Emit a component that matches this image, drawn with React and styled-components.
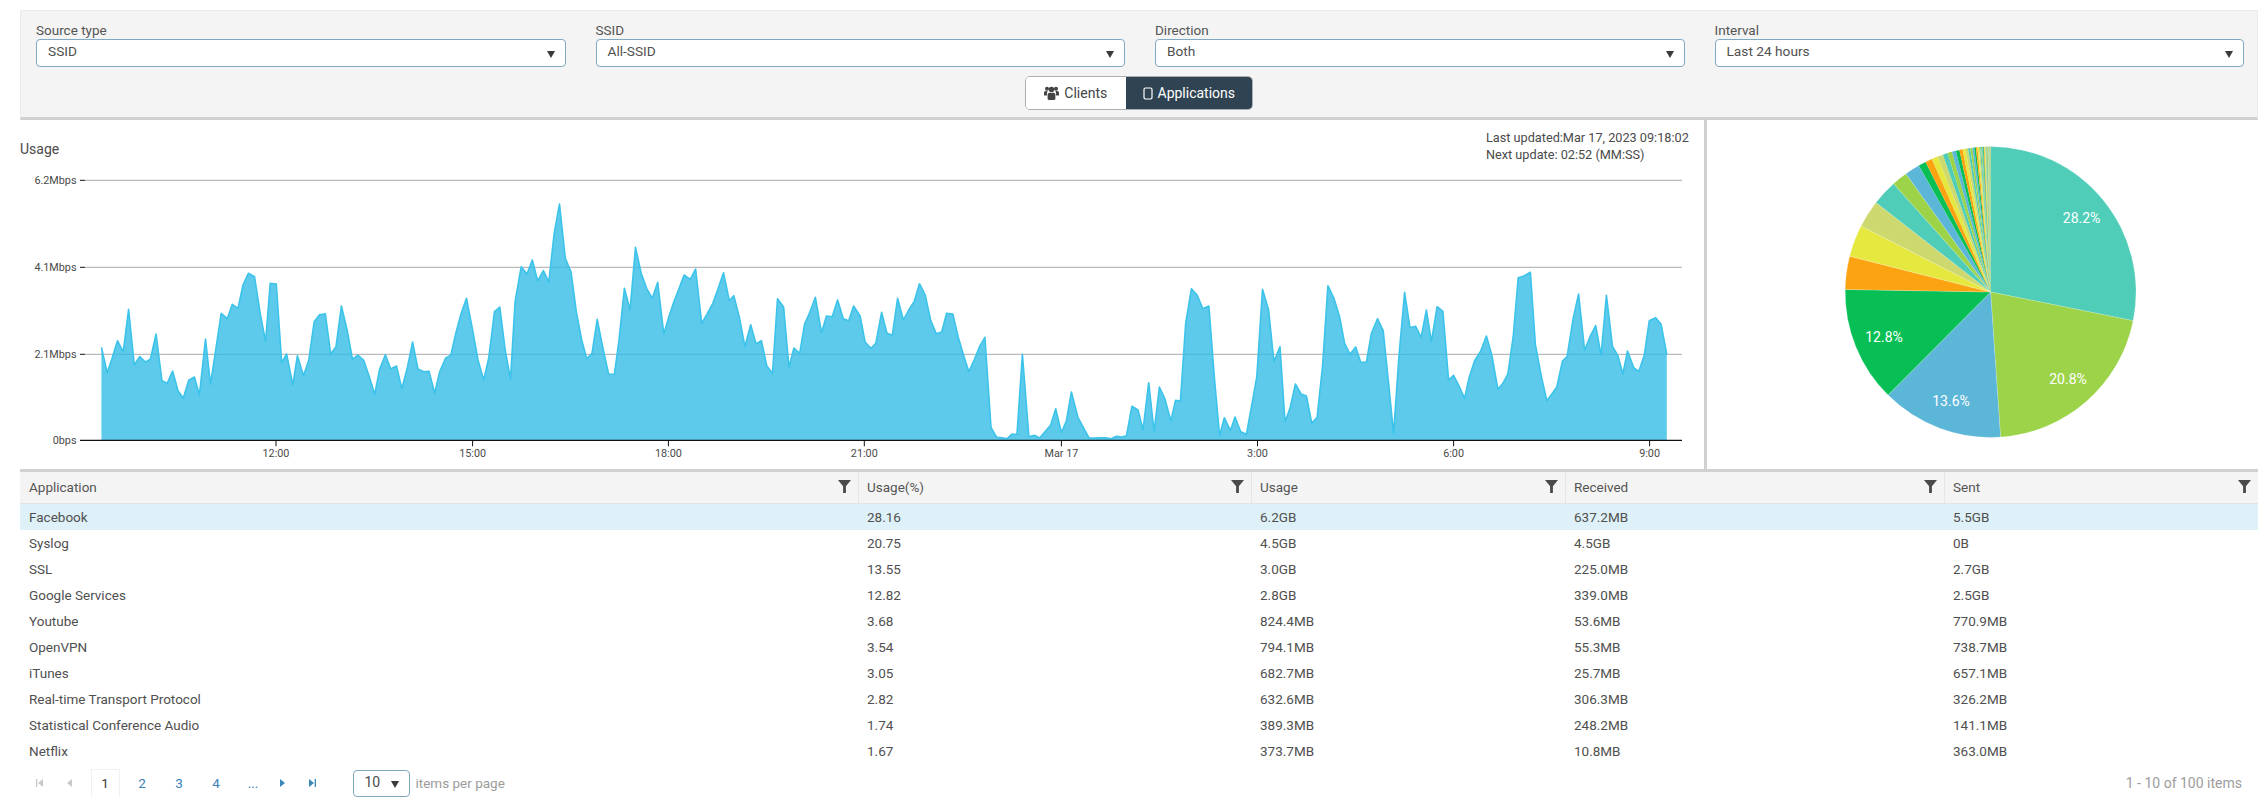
import React from "react";
import styled, { createGlobalStyle } from "styled-components";

const Global = createGlobalStyle`
  html, body { margin: 0; padding: 0; background: #fff; }
  body { font-family: Roboto, "Liberation Sans", sans-serif; color: #4a4a4a; overflow: hidden; }
  * { box-sizing: border-box; }
`;

const Page = styled.div`
  width: 2265px;
  height: 804px;
  padding: 10px 7px 0 20px;
  overflow: hidden;
`;

const FilterPanel = styled.section`
  height: 110px;
  padding: 10px 13px 0 15px;
  background: #f4f4f4;
  border: 1px solid #ebebeb;
  border-bottom: 3px solid #d2cfcf;
  display: flex;
  flex-direction: column;
  align-items: center;
`;

const FilterGrid = styled.div`
  width: 100%;
  display: grid;
  grid-template-columns: repeat(4, 1fr);
  column-gap: 30px;
`;

const Field = styled.div`
  display: flex;
  flex-direction: column;
`;

const FieldLabel = styled.label`
  font-size: 13.5px;
  line-height: 18px;
  color: #555;
`;

const Select = styled.div`
  height: 28px;
  background: #fff;
  border: 1px solid #7fa9c2;
  border-radius: 4px;
  padding: 0 10px 4px 11px;
  display: flex;
  align-items: center;
  justify-content: space-between;
  font-size: 13.7px;
  color: #505050;
`;

const Caret = styled.span`
  width: 0;
  height: 0;
  margin-top: 6px;
  border-left: 4px solid transparent;
  border-right: 4px solid transparent;
  border-top: 7px solid #3a3a3a;
`;

const Toggle = styled.div`
  display: flex;
  margin: 9px 2px 0 0;
  width: 228px;
  height: 34px;
  border: 1px solid #a9b0b5;
  border-radius: 5px;
  overflow: hidden;
`;

const ToggleButton = styled.button`
  border: 0;
  padding: 0;
  width: ${(p) => (p.$active ? "127px" : "100px")};
  display: flex;
  align-items: center;
  justify-content: center;
  gap: 5px;
  font-family: inherit;
  font-size: 14px;
  background: ${(p) => (p.$active ? "#2f4352" : "#fff")};
  color: ${(p) => (p.$active ? "#fff" : "#444")};
`;

const ContentRow = styled.section`
  display: flex;
  height: 349px;
`;

const ChartPane = styled.div`
  width: 1687px;
  border-right: 3px solid #d2cfcf;
  display: flex;
  flex-direction: column;
`;

const ChartHead = styled.div`
  height: 45px;
  padding: 9px 15px 0 0;
  display: flex;
  justify-content: space-between;
  font-size: 12.7px;
  line-height: 17px;
  color: #4a4a4a;
`;

const ChartTitle = styled.div`
  padding-top: 12px;
  font-size: 14px;
`;

const Stamp = styled.div`
  width: 203px;
  white-space: nowrap;
`;

const Svg = styled.svg`
  display: block;
`;

const AxisText = styled.text`
  font-size: 10.8px;
  fill: #4a4a4a;
  font-family: Roboto, sans-serif;
`;

const PieLabel = styled.text`
  font-size: 14px;
  fill: #fff;
  font-family: Roboto, sans-serif;
  text-anchor: middle;
  dominant-baseline: central;
`;

const PiePane = styled.div`
  flex: 1;
`;

const Table = styled.section`
  border-top: 3px solid #d2cfcf;
`;

const COLS = "838px 393px 314px 379px 314px";

const HeadRow = styled.div`
  display: grid;
  grid-template-columns: ${COLS};
  height: 32px;
  background: #f4f4f4;
  border-bottom: 1px solid #e3e3e3;
`;

const HeadCell = styled.div`
  display: flex;
  align-items: center;
  justify-content: space-between;
  padding: 0 7px 2px ${(p) => (p.$first ? "9px" : "8px")};
  font-size: 13.5px;
  color: #555;
  border-left: ${(p) => (p.$first ? "0" : "1px solid #e6e6e6")};
`;

const Row = styled.div`
  display: grid;
  grid-template-columns: ${COLS};
  height: 26px;
  align-items: center;
  font-size: 13.5px;
  color: #505050;
  background: ${(p) => (p.$selected ? "#dff1f8" : "#fff")};
`;

const Cell = styled.div`
  padding-left: 9px;
  white-space: nowrap;
`;

const Pager = styled.div`
  height: 39px;
  display: flex;
  align-items: center;
  justify-content: space-between;
  padding: 0 16px 1px 0;
  font-size: 13.5px;
`;

const PagerLeft = styled.div`
  display: flex;
  align-items: center;
  padding-left: 4px;
`;

const NavIcon = styled.span`
  width: 30px;
  margin-left: ${(p) => p.$shift || 0}px;
  display: flex;
  justify-content: center;
  color: ${(p) => (p.$off ? "#c9c9c9" : "#3b87b8")};
`;

const PageNum = styled.span`
  width: 37px;
  height: 28px;
  margin-left: ${(p) => (p.$current ? "2.5px" : "0")};
  display: flex;
  align-items: center;
  justify-content: center;
  color: ${(p) => (p.$current ? "#3a3a3a" : "#3b82b8")};
  position: relative;
  &::before {
    content: "";
    display: ${(p) => (p.$current ? "block" : "none")};
    position: absolute;
    top: 0;
    bottom: 0;
    left: 4px;
    right: 4px;
    border: 1px solid #f1f1f1;
    border-bottom: 0;
  }
`;

const PerPage = styled.div`
  width: 57px;
  height: 27px;
  margin-left: 25px;
  border: 1px solid #7fa9c2;
  border-radius: 4px;
  padding: 0 10px 3px 11px;
  display: flex;
  align-items: center;
  justify-content: space-between;
  font-size: 14px;
  color: #4a4a4a;
`;

const PagerHint = styled.span`
  margin-left: 6px;
  color: #9c9c9c;
  font-size: ${(p) => p.$size || 13.5}px;
`;

const Funnel = () => (
  <svg width="13" height="13" viewBox="0 0 13 13" aria-hidden="true">
    <path d="M0 0h13L7.9 6.2V13H5.1V6.2z" fill="#4a4a4a" />
  </svg>
);

const Tablet = () => (
  <svg width="10" height="13" viewBox="0 0 10 13" aria-hidden="true">
    <rect x="1" y="1" width="8" height="11" rx="1.4" fill="none" stroke="#fff" strokeWidth="1.2" />
  </svg>
);

const Users = () => (
  <svg width="15" height="14" viewBox="0 0 15 14" aria-hidden="true">
    <g fill="#444">
      <circle cx="3" cy="2.7" r="2" />
      <circle cx="12" cy="2.7" r="2" />
      <circle cx="7.5" cy="3.4" r="2.7" />
      <path d="M0 9.4V7c0-1 .7-1.9 1.7-1.9h1.8c-.5 1.1-.7 2.6-.6 4.3z" />
      <path d="M15 9.4V7c0-1-.7-1.9-1.7-1.9h-1.8c.5 1.1.7 2.6.6 4.3z" />
      <path d="M3.6 12.4V9c0-1.3.9-2.2 1.9-2.2h4c1 0 1.9.9 1.9 2.2v3.4c0 1-.9 1.6-1.9 1.6h-4c-1 0-1.9-.6-1.9-1.6z" />
    </g>
  </svg>
);

const Nav = ({ d }) => (
  <svg width="9" height="10" viewBox="0 0 9 10" aria-hidden="true">
    <path d={d} fill="currentColor" />
  </svg>
);

const seg4 = [[265,592],[280,668],[293,625],[307,572],[322,606],[336,478],[351,645],[365,620],[380,636],[393,628],[408,552],[423,692],[437,700],[451,663],[465,722],[479,745],[493,691],[508,681],[521,735],[537,567],[550,703],[565,590],[578,490],[594,506],[607,463],[622,475],[635,405],[649,370],[665,380],[680,490],[694,575],[706,400],[722,402],[736,638],[749,612],[765,705],[777,617],[793,677],[807,630],[821,515],[835,494],[850,491],[864,612],[878,590],[892,468],[907,540],[921,628],[935,615],[950,630],[965,680],[979,733],[992,658],[1007,614],[1021,657],[1036,648],[1050,716],[1064,655],[1078,576],[1092,657],[1107,665],[1121,664],[1136,730],[1149,665],[1164,625],[1178,616],[1192,545],[1205,490],[1219,445],[1234,535],[1249,630],[1264,690],[1277,625],[1292,485],[1306,471],[1320,600],[1334,688],[1346,455],[1362,350],[1377,372],[1391,330],[1405,393],[1420,362],[1434,396],[1448,250],[1462,162],[1477,325],[1492,365],[1506,485],[1520,570],[1533,626],[1547,610]];
const seg5 = [[45,448],[60,535],[75,613],[90,612],[102,510],[116,355],[131,420],[145,232],[160,310],[174,355],[189,385],[203,337],[219,492],[233,437],[247,390],[260,352],[272,315],[288,328],[302,297],[318,460],[333,430],[347,400],[361,355],[375,308],[390,392],[402,377],[417,445],[431,530],[446,464],[460,522],[474,512],[488,588],[503,610],[516,386],[532,411],[546,592],[559,534],[574,550],[587,462],[601,425],[615,382],[631,488],[644,438],[659,440],[673,390],[688,446],[702,452],[715,408],[732,438],[745,516],[760,535],[773,520],[788,427],[802,490],[816,496],[830,385],[845,450],[859,420],[873,395],[887,341],[902,375],[916,450],[931,491],[945,486],[958,430],[974,432],[988,500],[1002,555],[1016,605],[1030,570],[1044,530],[1058,502],[1074,772],[1088,801],[1102,803],[1116,806],[1128,793],[1142,793],[1156,553],[1173,800],[1187,796],[1201,804],[1215,785],[1230,765],[1243,716],[1258,788],[1271,752],[1284,666],[1301,742],[1315,772],[1330,804],[1345,804],[1359,803],[1373,803],[1388,806],[1402,799],[1416,801],[1428,797],[1442,709],[1458,720],[1471,780],[1486,638],[1500,785],[1514,651],[1528,686],[1544,753],[1556,691]];
const seg6 = [[85,693],[100,460],[116,356],[132,375],[148,416],[165,408],[180,620],[195,797],[208,743],[225,782],[238,741],[254,785],[270,793],[285,705],[299,620],[315,358],[332,420],[347,575],[364,530],[378,755],[392,715],[407,642],[423,672],[438,678],[453,760],[468,742],[483,590],[498,347],[515,385],[531,440],[545,520],[560,553],[576,531],[590,577],[606,576],[620,490],[637,446],[653,482],[668,640],[682,792],[697,560],[713,367],[728,473],[744,469],[759,502],[774,420],[788,515],[804,410],[820,424],[836,630],[850,616],[866,650],[881,685],[893,625],[909,572],[925,545],[942,498],[957,555],[974,658],[988,640],[1002,612],[1017,500],[1031,323],[1047,318],[1065,307],[1079,525],[1096,620],[1111,692],[1125,672],[1139,651],[1155,573],[1168,560],[1185,445],[1200,372],[1217,541],[1232,500],[1248,467],[1263,556],[1278,376],[1295,529],[1310,557],[1324,612],[1337,543],[1355,594],[1369,604],[1384,555],[1398,452],[1416,443],[1431,463],[1447,553]];

const fmt = ([x, y]) => `${x.toFixed(1)},${y.toFixed(1)}`;
const trace = [
  ...seg4.map(([x, y]) => [x / 2.613, y / 3 + 150]),
  ...seg5.map(([x, y]) => [580 + x / 2.613, y / 3 + 170]),
  ...seg6.map(([x, y]) => [1150 + x / 2.8, y / 3 + 170]),
];
const AXIS_Y = 440.3;
const linePts = trace.map(fmt).join(" ");
const areaPts = `${trace[0][0].toFixed(1)},${AXIS_Y} ${linePts} ${trace[trace.length - 1][0].toFixed(1)},${AXIS_Y}`;

const GRID = [
  ["6.2Mbps", 180.3],
  ["4.1Mbps", 267.3],
  ["2.1Mbps", 354.3],
];
const TICKS = [
  ["12:00", 276],
  ["15:00", 472.6],
  ["18:00", 668.4],
  ["21:00", 864.3],
  ["Mar 17", 1061.4],
  ["3:00", 1257.5],
  ["6:00", 1453.6],
  ["9:00", 1649.6],
];

const UsageChart = () => (
  <Svg width="1684" height="304" viewBox="20 165 1684 304">
    {GRID.map(([label, y]) => (
      <g key={label}>
        <line x1="85" x2="1682" y1={y} y2={y} stroke="#a9a9a9" strokeWidth="1" />
        <line x1="80" x2="85" y1={y} y2={y} stroke="#111" strokeWidth="1" />
        <AxisText x="76.5" y={y + 3.6} textAnchor="end">{label}</AxisText>
      </g>
    ))}
    <polygon points={areaPts} fill="#2fbbe6" fillOpacity="0.78" />
    <polyline points={linePts} fill="none" stroke="#3cc3ea" strokeWidth="1.6" strokeLinejoin="round" />
    <line x1="80" x2="1682" y1={AXIS_Y} y2={AXIS_Y} stroke="#111" strokeWidth="1.2" />
    <AxisText x="76.5" y={AXIS_Y + 3.6} textAnchor="end">0bps</AxisText>
    {TICKS.map(([label, x]) => (
      <g key={label}>
        <line x1={x} x2={x} y1={AXIS_Y} y2={AXIS_Y + 6} stroke="#111" strokeWidth="1" />
        <AxisText x={x} y={AXIS_Y + 16.5} textAnchor="middle">{label}</AxisText>
      </g>
    ))}
  </Svg>
);

const PALETTE = ["#50cdb9", "#9cd348", "#5cb6d8", "#08bf56", "#fca311", "#e5e83f", "#cdd96e"];
const head = [28.16, 20.75, 13.55, 12.82, 3.68, 3.54, 3.05, 2.82, 1.74, 1.67];
const tail = Array.from({ length: 90 }, (_, i) => 0.85 * Math.pow(0.897, i));
const tailSum = tail.reduce((a, b) => a + b, 0);
const slices = [...head, ...tail.map((v) => (v * 8.22) / tailSum)];

const CX = 1990.6;
const CY = 292;
const R = 145.4;
const polar = (pct) => {
  const a = (pct / 100) * 2 * Math.PI;
  return [CX + R * Math.sin(a), CY - R * Math.cos(a)];
};

const PieChart = () => {
  let acc = 0;
  return (
    <Svg width="551" height="349" viewBox="1707 120 551 349">
      {slices.map((v, i) => {
        const [x1, y1] = polar(acc);
        acc += v;
        const [x2, y2] = polar(acc);
        const large = v > 50 ? 1 : 0;
        return (
          <path
            key={i}
            d={`M${CX},${CY} L${x1.toFixed(2)},${y1.toFixed(2)} A${R},${R} 0 ${large} 1 ${x2.toFixed(2)},${y2.toFixed(2)} Z`}
            fill={PALETTE[i % PALETTE.length]}
            stroke="#fff"
            strokeOpacity={v > 1 ? 0.35 : 0.1}
            strokeWidth={v > 1 ? 0.5 : 0.15}
          />
        );
      })}
      <PieLabel x="2081.6" y="218">28.2%</PieLabel>
      <PieLabel x="2068" y="379">20.8%</PieLabel>
      <PieLabel x="1951" y="401">13.6%</PieLabel>
      <PieLabel x="1884" y="336.7">12.8%</PieLabel>
    </Svg>
  );
};

const FILTERS = [
  ["Source type", "SSID"],
  ["SSID", "All-SSID"],
  ["Direction", "Both"],
  ["Interval", "Last 24 hours"],
];

const HEADERS = ["Application", "Usage(%)", "Usage", "Received", "Sent"];

const ROWS = [
  ["Facebook", "28.16", "6.2GB", "637.2MB", "5.5GB"],
  ["Syslog", "20.75", "4.5GB", "4.5GB", "0B"],
  ["SSL", "13.55", "3.0GB", "225.0MB", "2.7GB"],
  ["Google Services", "12.82", "2.8GB", "339.0MB", "2.5GB"],
  ["Youtube", "3.68", "824.4MB", "53.6MB", "770.9MB"],
  ["OpenVPN", "3.54", "794.1MB", "55.3MB", "738.7MB"],
  ["iTunes", "3.05", "682.7MB", "25.7MB", "657.1MB"],
  ["Real-time Transport Protocol", "2.82", "632.6MB", "306.3MB", "326.2MB"],
  ["Statistical Conference Audio", "1.74", "389.3MB", "248.2MB", "141.1MB"],
  ["Netflix", "1.67", "373.7MB", "10.8MB", "363.0MB"],
];

export default function App() {
  return (
    <Page>
      <Global />
      <FilterPanel>
        <FilterGrid>
          {FILTERS.map(([label, value]) => (
            <Field key={label}>
              <FieldLabel>{label}</FieldLabel>
              <Select>
                {value}
                <Caret />
              </Select>
            </Field>
          ))}
        </FilterGrid>
        <Toggle>
          <ToggleButton>
            <Users />
            Clients
          </ToggleButton>
          <ToggleButton $active>
            <Tablet />
            Applications
          </ToggleButton>
        </Toggle>
      </FilterPanel>

      <ContentRow>
        <ChartPane>
          <ChartHead>
            <ChartTitle>Usage</ChartTitle>
            <Stamp>
              Last updated:Mar 17, 2023 09:18:02
              <br />
              Next update: 02:52 (MM:SS)
            </Stamp>
          </ChartHead>
          <UsageChart />
        </ChartPane>
        <PiePane>
          <PieChart />
        </PiePane>
      </ContentRow>

      <Table>
        <HeadRow>
          {HEADERS.map((h, i) => (
            <HeadCell key={h} $first={i === 0}>
              {h}
              <Funnel />
            </HeadCell>
          ))}
        </HeadRow>
        {ROWS.map((r, i) => (
          <Row key={r[0]} $selected={i === 0}>
            {r.map((c, j) => (
              <Cell key={j}>{c}</Cell>
            ))}
          </Row>
        ))}
        <Pager>
          <PagerLeft>
            <NavIcon $off><Nav d="M1 1h1.3v8H1zM8 1v8L3 5z" /></NavIcon>
            <NavIcon $off><Nav d="M7 1v8L2 5z" /></NavIcon>
            <PageNum $current>1</PageNum>
            <PageNum>2</PageNum>
            <PageNum>3</PageNum>
            <PageNum>4</PageNum>
            <PageNum>...</PageNum>
            <NavIcon $shift={-4}><Nav d="M2 1v8l5-4z" /></NavIcon>
            <NavIcon><Nav d="M1 1v8l5-4zM6.7 1H8v8H6.7z" /></NavIcon>
            <PerPage>
              10
              <Caret />
            </PerPage>
            <PagerHint>items per page</PagerHint>
          </PagerLeft>
          <PagerHint $size={14}>1 - 10 of 100 items</PagerHint>
        </Pager>
      </Table>
    </Page>
  );
}
